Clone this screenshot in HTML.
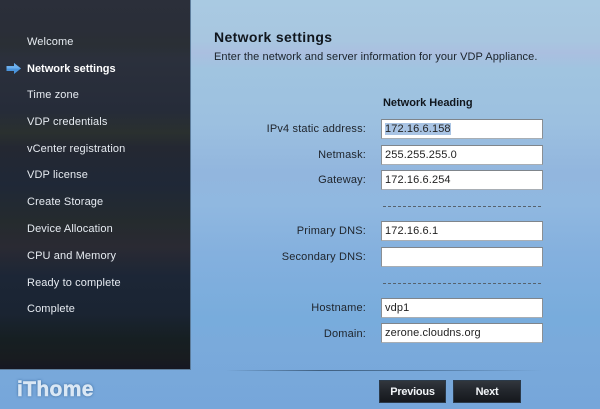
<!DOCTYPE html>
<html><head><meta charset="utf-8"><style>
html,body{margin:0;padding:0}
#p{position:relative;width:600px;height:409px;overflow:hidden;font-family:"Liberation Sans",sans-serif;font-size:11px;background:linear-gradient(180deg,#a9cae2 0,#a8c6e0 10%,#aabfe0 13%,#a0c4e0 17%,#9cc0e0 30%,#92b6de 42%,#90b8e0 50%,#84b0de 62%,#78acdc 78%,#7aaadb 84%,#76a6da 100%)}
#s{position:absolute;left:0;top:0;width:190px;height:369px;border-right:1px solid #5d7d9c;border-bottom:1px solid #5d7d9c;background:linear-gradient(180deg,#2b2f3a 0,#2a2e38 8%,#2a2f35 12%,#2b303c 16%,#262c39 30%,#2a302f 36%,#242832 40%,#1f2837 50%,#252b2e 60%,#2a2a33 67%,#1c2636 75%,#1a2432 85%,#161f22 92%,#181c20 97%,#161722 100%)}
.n{position:absolute;left:27px;color:#e6ebf1;font-size:11px;line-height:14px;white-space:nowrap;letter-spacing:.12px}
.l{position:absolute;right:234px;color:#20262e;line-height:14px;white-space:nowrap;letter-spacing:.17px}
.i{position:absolute;left:381px;height:18px;width:160px;background:#fff;border:1px solid #8a8f94;border-top:1px solid #7f858b;border-bottom:1px solid #a8aeb4;color:#222;line-height:18px;text-indent:3px;letter-spacing:.12px;white-space:nowrap}
.d{position:absolute;left:383px;width:158px;top:0;border-top:1px dashed #56626e;height:0}
.b{position:absolute;top:380px;height:23px;line-height:24px;text-align:center;color:#f2f5f8;font-weight:bold;font-size:11px;letter-spacing:-.25px;background:linear-gradient(180deg,#33383f 0,#23272d 45%,#14171b 100%);box-shadow:inset 0 0 0 1px #2b3a4a}
</style></head><body><div id="p">
<div id="s"></div>
<div class="n" style="top:35px">Welcome</div>
<svg style="position:absolute;left:6px;top:62px" width="16" height="13" viewBox="0 0 16 13"><path d="M0.5 4 H8 V1 L15 6.5 L8 12 V9 H0.5 Z" fill="#4a94dc"/><path d="M0.5 4 H8 V1 L15 6.5 H0.5 Z" fill="#6cb0ee"/></svg>
<div class="n" style="top:62px;font-weight:bold;color:#fff;letter-spacing:0">Network settings</div>
<div class="n" style="top:88px">Time zone</div>
<div class="n" style="top:115px">VDP credentials</div>
<div class="n" style="top:142px">vCenter registration</div>
<div class="n" style="top:168px">VDP license</div>
<div class="n" style="top:195px">Create Storage</div>
<div class="n" style="top:222px">Device Allocation</div>
<div class="n" style="top:249px">CPU and Memory</div>
<div class="n" style="top:276px">Ready to complete</div>
<div class="n" style="top:302px">Complete</div>
<div style="position:absolute;left:17px;top:378px;color:#dbe8f5;font-weight:bold;font-size:21px;line-height:24px;letter-spacing:.35px;-webkit-text-stroke:.5px #dbe8f5;text-shadow:0 0 3px #4a78a8,0 0 2px #4a78a8">iThome</div>
<div style="position:absolute;left:214px;top:28px;font-size:14px;font-weight:bold;color:#10161d;line-height:18px;letter-spacing:.35px">Network settings</div>
<div style="position:absolute;left:214px;top:50px;color:#1b222a;line-height:14px;letter-spacing:.08px;white-space:nowrap">Enter the network and server information for your VDP Appliance.</div>
<div style="position:absolute;left:383px;top:96px;font-weight:bold;font-size:11px;color:#10161d;line-height:14px;letter-spacing:-.02px">Network Heading</div>
<div class="l" style="top:122px">IPv4 static address:</div>
<div class="i" style="top:119px"><span style="background:#a9c4e4">172.16.6.158</span></div>
<div class="l" style="top:148px">Netmask:</div>
<div class="i" style="top:145px">255.255.255.0</div>
<div class="l" style="top:173px">Gateway:</div>
<div class="i" style="top:170px">172.16.6.254</div>
<div class="d" style="top:206px"></div>
<div class="l" style="top:224px">Primary DNS:</div>
<div class="i" style="top:221px">172.16.6.1</div>
<div class="l" style="top:250px">Secondary DNS:</div>
<div class="i" style="top:247px"></div>
<div class="d" style="top:283px"></div>
<div class="l" style="top:301px">Hostname:</div>
<div class="i" style="top:298px">vdp1</div>
<div class="l" style="top:327px">Domain:</div>
<div class="i" style="top:323px;line-height:19px">zerone.cloudns.org</div>
<div style="position:absolute;left:225px;top:370px;width:375px;height:1px;background:linear-gradient(90deg,rgba(60,90,120,0),#3f5f80 25%,#4f769e 50%,rgba(90,130,170,0) 85%)"></div>
<div class="b" style="left:379px;width:67px">Previous</div>
<div class="b" style="left:453px;width:68px">Next</div>
</div></body></html>
